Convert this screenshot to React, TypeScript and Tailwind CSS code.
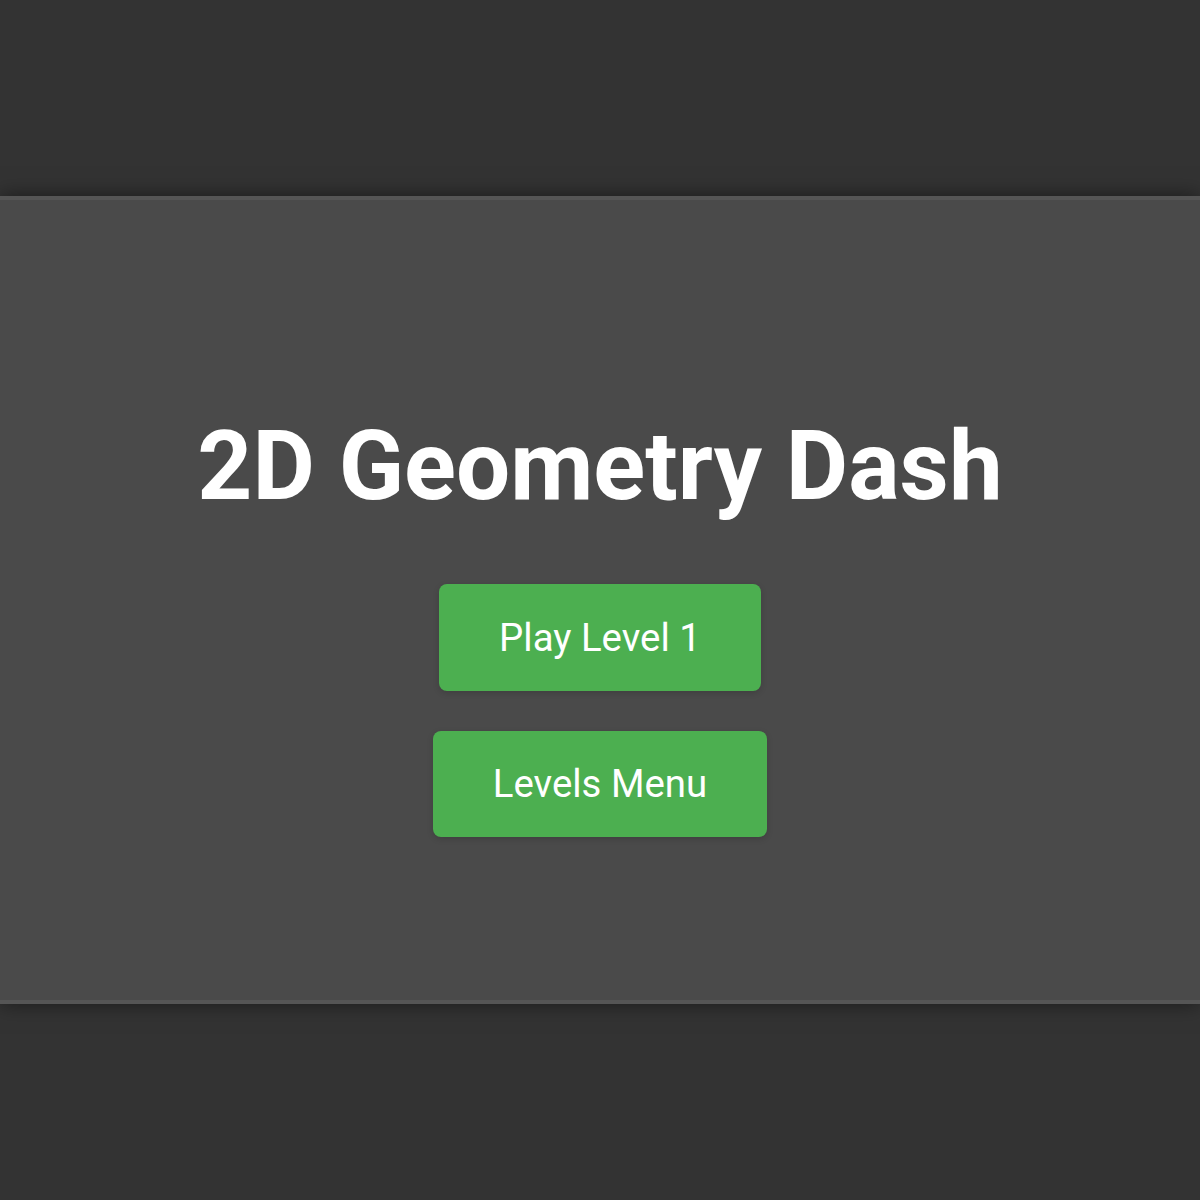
export default function App() {
  return (
    <div
      className="w-full h-[1200px] bg-[#333333] flex items-center justify-center"
      style={{ fontFamily: "Roboto, 'Liberation Sans', sans-serif" }}
    >
      <div className="w-full h-[808px] bg-[#4a4a4a] border-y-4 border-[#555555] shadow-[0_0_20px_rgba(0,0,0,0.5)] flex flex-col items-center justify-center">
        <h1 className="text-[96px] font-bold text-white leading-[1.17] mt-[47px] mb-[62px]">2D Geometry Dash</h1>
        <div className="flex flex-col items-center gap-10">
          <button className="bg-[#4caf50] text-white text-[38.4px] leading-[45px] py-[30.7px] px-[60px] rounded-lg shadow-[0_2px_6px_rgba(0,0,0,0.15)]">
            Play Level 1
          </button>
          <button className="bg-[#4caf50] text-white text-[38.4px] leading-[45px] py-[30.7px] px-[60px] rounded-lg shadow-[0_2px_6px_rgba(0,0,0,0.15)]">
            Levels Menu
          </button>
        </div>
      </div>
    </div>
  );
}
